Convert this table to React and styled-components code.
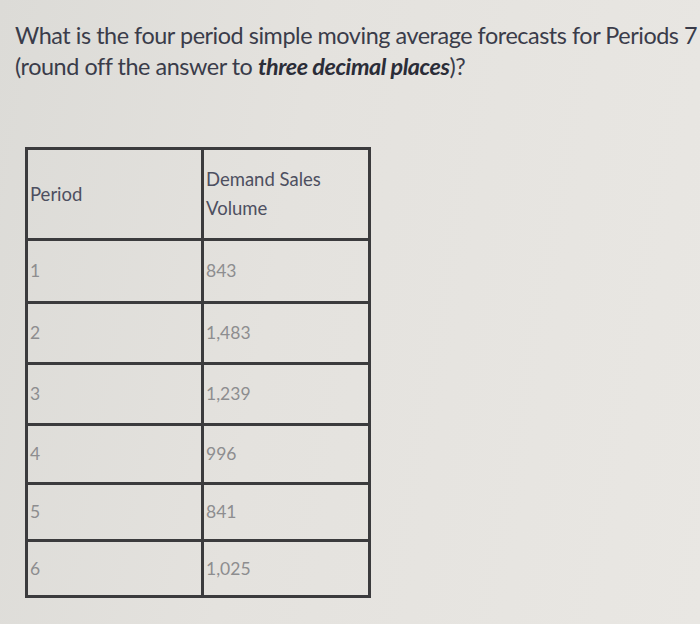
import React from "react";
import styled, { createGlobalStyle } from "styled-components";

const Global = createGlobalStyle`
  html, body { margin: 0; padding: 0; }
  body {
    width: 700px;
    height: 624px;
    overflow: hidden;
    background: linear-gradient(100deg, #dcdbd7 0%, #e4e2de 40%, #e9e7e3 100%);
    font-family: Lato, "Open Sans", sans-serif;
  }
`;

const Page = styled.div`
  display: flex;
  flex-direction: column;
  padding: 20px 0 0 15px;
`;

const Question = styled.p`
  margin: 0;
  font-size: 23.4px;
  line-height: 31px;
  color: #3a3c4a;
  letter-spacing: -0.45px;
  white-space: nowrap;
  b {
    font-weight: 700;
    font-style: italic;
    color: #2b2d38;
  }
`;

const Table = styled.table`
  margin: 65px 0 0 10px;
  width: 346px;
  border-collapse: collapse;
  border: 3px solid #3b3b3d;
`;

const Cell = styled.td`
  border: 3px solid #3b3b3d;
  padding: 0 0 0 2px;
  vertical-align: middle;
  height: ${(p) => p.$h}px;
  width: ${(p) => (p.$first ? "171px" : "auto")};
  font-size: ${(p) => (p.$head ? "18.5px" : "17.5px")};
  line-height: ${(p) => (p.$head ? "29px" : "20px")};
  color: ${(p) => (p.$head ? "#4d4f60" : "#8d8d8f")};
  font-weight: 400;
`;

const rows = [
  ["1", "843", 60],
  ["2", "1,483", 58],
  ["3", "1,239", 58],
  ["4", "996", 56],
  ["5", "841", 54],
  ["6", "1,025", 53],
];

export default function App() {
  return (
    <>
      <Global />
      <Page>
        <Question>
          What is the four period simple moving average forecasts for Periods 7
          <br />
          (round off the answer to <b>three decimal places</b>)?
        </Question>
        <Table>
          <tbody>
            <tr>
              <Cell $head $first $h={88}>Period</Cell>
              <Cell $head $h={88}>
                Demand Sales
                <br />
                Volume
              </Cell>
            </tr>
            {rows.map(([p, v, h]) => (
              <tr key={p}>
                <Cell $first $h={h}>{p}</Cell>
                <Cell $h={h}>{v}</Cell>
              </tr>
            ))}
          </tbody>
        </Table>
      </Page>
    </>
  );
}
